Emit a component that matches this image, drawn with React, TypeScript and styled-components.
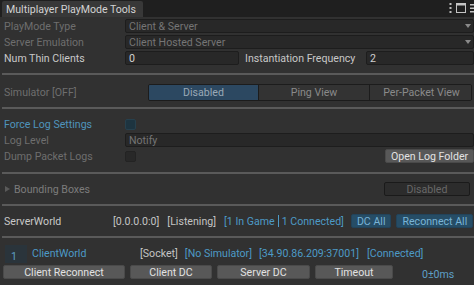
import React from "react";
import styled, { createGlobalStyle } from "styled-components";

const GlobalStyle = createGlobalStyle`
    html, body {
        margin: 0;
        padding: 0;
        background: #313131;
    }
    body {
        font-family: Roboto, "Noto Sans", "Liberation Sans", sans-serif;
        font-size: 10.6px;
        color: #c4c4c4;
    }
`;

/** The whole editor window */
const Window = styled.div`
    width: 474px;
    height: 285px;
    overflow: hidden;
    background: #313131;
    display: flex;
    flex-direction: column;
`;

/** The strip the tabs sit in */
const TabBar = styled.div`
    height: 17px;
    flex: none;
    background: #1f1f1f;
    display: flex;
    align-items: flex-end;
    padding-left: 2px;
    position: relative;
`;

const Tab = styled.div`
    height: 16px;
    width: 141px;
    box-sizing: border-box;
    padding: 0 0 0 4px;
    background: #383838;
    color: #d2d2d2;
    display: flex;
    align-items: center;
    border-radius: 2px 2px 0 0;
`;

const TabIcons = styled.div`
    position: absolute;
    right: -4px;
    top: 3px;
    display: flex;
    gap: 4px;
    align-items: center;
`;

const Content = styled.div`
    display: flex;
    flex-direction: column;
    padding-top: 1px;
`;

interface IRowProps {
    /** Space above the row */
    top?: number;
    height?: number;
}

const Row = styled.div<IRowProps>`
    display: flex;
    align-items: center;
    height: ${p => p.height ?? 16}px;
    margin-top: ${p => p.top ?? 0}px;
    padding-left: 4px;
`;

interface ILabelProps {
    dim?: boolean;
    blue?: boolean;
    width?: number;
}

const Label = styled.div<ILabelProps>`
    width: ${p => p.width ?? 121}px;
    flex: none;
    white-space: nowrap;
    color: ${p => (p.blue ? "#4f94bd" : p.dim ? "#6e6e6e" : "#c8c8c8")};
`;

interface IFieldProps {
    dim?: boolean;
    width?: number;
}

const Field = styled.div<IFieldProps>`
    height: 14px;
    ${p => (p.width ? `width: ${p.width}px; flex: none;` : "flex: 1;")}
    background: #282828;
    border: 1px solid #1d1d1d;
    border-radius: 2px;
    box-sizing: border-box;
    display: flex;
    align-items: center;
    padding-left: 3px;
    padding-right: 2px;
    color: ${p => (p.dim ? "#757575" : "#d0d0d0")};
`;

const Caret = styled.span`
    margin-left: auto;
    width: 0;
    height: 0;
    border-left: 3px solid transparent;
    border-right: 3px solid transparent;
    border-top: 4px solid #8a8a8a;
`;

interface IDividerProps {
    top: number;
}

const Divider = styled.div<IDividerProps>`
    height: 2px;
    flex: none;
    margin: ${p => p.top}px 0 0 2px;
    background: #5a5a5a;
`;

const Toolbar = styled.div`
    display: flex;
    margin-left: 23px;
    width: 322px;
    height: 15px;
    border: 1px solid #1c1c1c;
    border-radius: 2px;
    overflow: hidden;
`;

interface IToolButtonProps {
    active?: boolean;
    width: number;
}

const ToolButton = styled.div<IToolButtonProps>`
    width: ${p => p.width}px;
    flex: none;
    display: flex;
    align-items: center;
    justify-content: center;
    background: ${p => (p.active ? "#2c4861" : "#333333")};
    color: ${p => (p.active ? "#9aa9b6" : "#8a8a8a")};
    & + & {
        border-left: 1px solid #1c1c1c;
    }
`;

interface ICheckProps {
    on?: boolean;
}

const Check = styled.div<ICheckProps>`
    width: 11px;
    height: 11px;
    box-sizing: border-box;
    background: ${p => (p.on ? "#1d3440" : "#282828")};
    border: 1px solid ${p => (p.on ? "#26404d" : "#232323")};
    border-radius: 2px;
`;

interface IButtonProps {
    width?: number;
    variant?: "normal" | "blue" | "off";
}

const Button = styled.div<IButtonProps>`
    height: 14px;
    ${p => (p.width ? `width: ${p.width}px;` : "")}
    flex: none;
    box-sizing: border-box;
    display: flex;
    align-items: center;
    justify-content: center;
    border-radius: 2px;
    white-space: nowrap;
    padding: 0 5px;
    background: ${p =>
        p.variant === "blue" ? "#264d66" : p.variant === "off" ? "#2c2c2c" : "#585858"};
    border: 1px solid
        ${p => (p.variant === "off" ? "#1a1a1a" : p.variant === "blue" ? "#22435a" : "#4a4a4a")};
    color: ${p =>
        p.variant === "blue" ? "#79b4d6" : p.variant === "off" ? "#686868" : "#e2e2e2"};
`;

interface ITextProps {
    at?: number;
    blue?: boolean;
    width?: number;
}

const Text = styled.span<ITextProps>`
    white-space: nowrap;
    flex: none;
    ${p => (p.width ? `width: ${p.width}px;` : "")}
    margin-left: ${p => p.at ?? 0}px;
    color: ${p => (p.blue ? "#4d9ac6" : "#c4c4c4")};
`;

const Pipe = styled.span`
    display: inline-block;
    width: 1px;
    height: 12px;
    margin: 0 3px;
    vertical-align: -2px;
    background: #4d9ac6;
`;

const Foldout = styled.div`
    display: flex;
    align-items: center;
    gap: 4px;
    width: 380px;
    color: #7c7c7c;
    &::before {
        content: "";
        width: 0;
        height: 0;
        border-top: 3px solid transparent;
        border-bottom: 3px solid transparent;
        border-left: 5px solid #5a5a5a;
        margin-left: 1px;
    }
`;

const IndexBox = styled.div`
    width: 22px;
    height: 18px;
    flex: none;
    margin-left: 1px;
    background: #2a343b;
    color: #5e9ec4;
    display: flex;
    align-items: flex-end;
    justify-content: center;
    box-sizing: border-box;
    padding-right: 4px;
`;

const ButtonRow = styled.div`
    display: flex;
    align-items: center;
    gap: 5px;
    height: 14px;
    margin-top: 2px;
    padding-left: 3px;
`;

const Ping = styled.span`
    margin-left: 24px;
    margin-top: 5px;
    color: #5e9fc6;
`;

export default function App() {
    return (
        <>
            <GlobalStyle />
            <Window>
                <TabBar>
                    <Tab>Multiplayer PlayMode Tools</Tab>
                    <TabIcons>
                        <svg width="3" height="10" viewBox="0 0 3 10">
                            <rect x="0.5" y="0" width="2" height="2" fill="#bdbdbd" />
                            <rect x="0.5" y="4" width="2" height="2" fill="#bdbdbd" />
                            <rect x="0.5" y="8" width="2" height="2" fill="#bdbdbd" />
                        </svg>
                        <svg width="10" height="10" viewBox="0 0 10 10">
                            <rect x="0.5" y="0.5" width="9" height="9" fill="none" stroke="#c4c4c4" />
                            <rect x="0.5" y="0.5" width="9" height="2" fill="#c4c4c4" />
                        </svg>
                        <svg width="8" height="10" viewBox="0 0 8 10">
                            <rect x="0" y="1" width="8" height="1.5" fill="#c4c4c4" />
                            <rect x="0" y="4.5" width="8" height="1.5" fill="#c4c4c4" />
                            <rect x="0" y="8" width="8" height="1.5" fill="#c4c4c4" />
                        </svg>
                    </TabIcons>
                </TabBar>
                <Content>
                    <Row>
                        <Label dim>PlayMode Type</Label>
                        <Field dim>
                            Client &amp; Server
                            <Caret />
                        </Field>
                    </Row>
                    <Row>
                        <Label dim>Server Emulation</Label>
                        <Field dim>
                            Client Hosted Server
                            <Caret />
                        </Field>
                    </Row>
                    <Row>
                        <Label>Num Thin Clients</Label>
                        <Field width={114}>0</Field>
                        <Label width={121} style={{ marginLeft: 6 }}>
                            Instantiation Frequency
                        </Label>
                        <Field>2</Field>
                    </Row>

                    <Divider top={7} />
                    <Row top={9}>
                        <Label dim>Simulator [OFF]</Label>
                        <Toolbar>
                            <ToolButton active width={109}>Disabled</ToolButton>
                            <ToolButton width={110}>Ping View</ToolButton>
                            <ToolButton width={103}>Per-Packet View</ToolButton>
                        </Toolbar>
                    </Row>

                    <Divider top={7} />
                    <Row top={7}>
                        <Label blue>Force Log Settings</Label>
                        <Check on />
                    </Row>
                    <Row>
                        <Label dim>Log Level</Label>
                        <Field dim>Notify</Field>
                    </Row>
                    <Row>
                        <Label dim>Dump Packet Logs</Label>
                        <Check />
                        <Button style={{ marginLeft: "auto" }} width={89}>
                            Open Log Folder
                        </Button>
                    </Row>

                    <Divider top={8} />
                    <Row top={7}>
                        <Foldout>Bounding Boxes</Foldout>
                        <Button variant="off" width={86}>
                            Disabled
                        </Button>
                    </Row>

                    <Divider top={7} />
                    <Row top={7}>
                        <Label width={109}>ServerWorld</Label>
                        <Text>[0.0.0.0:0]</Text>
                        <Text at={8}>[Listening]</Text>
                        <Text at={8} blue>
                            [1 In Game<Pipe />1 Connected]
                        </Text>
                        <Button variant="blue" style={{ marginLeft: 7 }}>
                            DC All
                        </Button>
                        <Button variant="blue" style={{ marginLeft: 5 }}>
                            Reconnect All
                        </Button>
                    </Row>

                    <Divider top={7} />
                    <Row top={6} height={19}>
                        <IndexBox>1</IndexBox>
                        <Text at={5} blue width={108}>ClientWorld</Text>
                        <Text>[Socket]</Text>
                        <Text at={7} blue>[No Simulator]</Text>
                        <Text at={7} blue>[34.90.86.209:37001]</Text>
                        <Text at={8} blue>[Connected]</Text>
                    </Row>
                    <ButtonRow>
                        <Button width={122}>Client Reconnect</Button>
                        <Button width={82}>Client DC</Button>
                        <Button width={93}>Server DC</Button>
                        <Button width={78}>Timeout</Button>
                        <Ping>0±0ms</Ping>
                    </ButtonRow>
                </Content>
            </Window>
        </>
    );
}
